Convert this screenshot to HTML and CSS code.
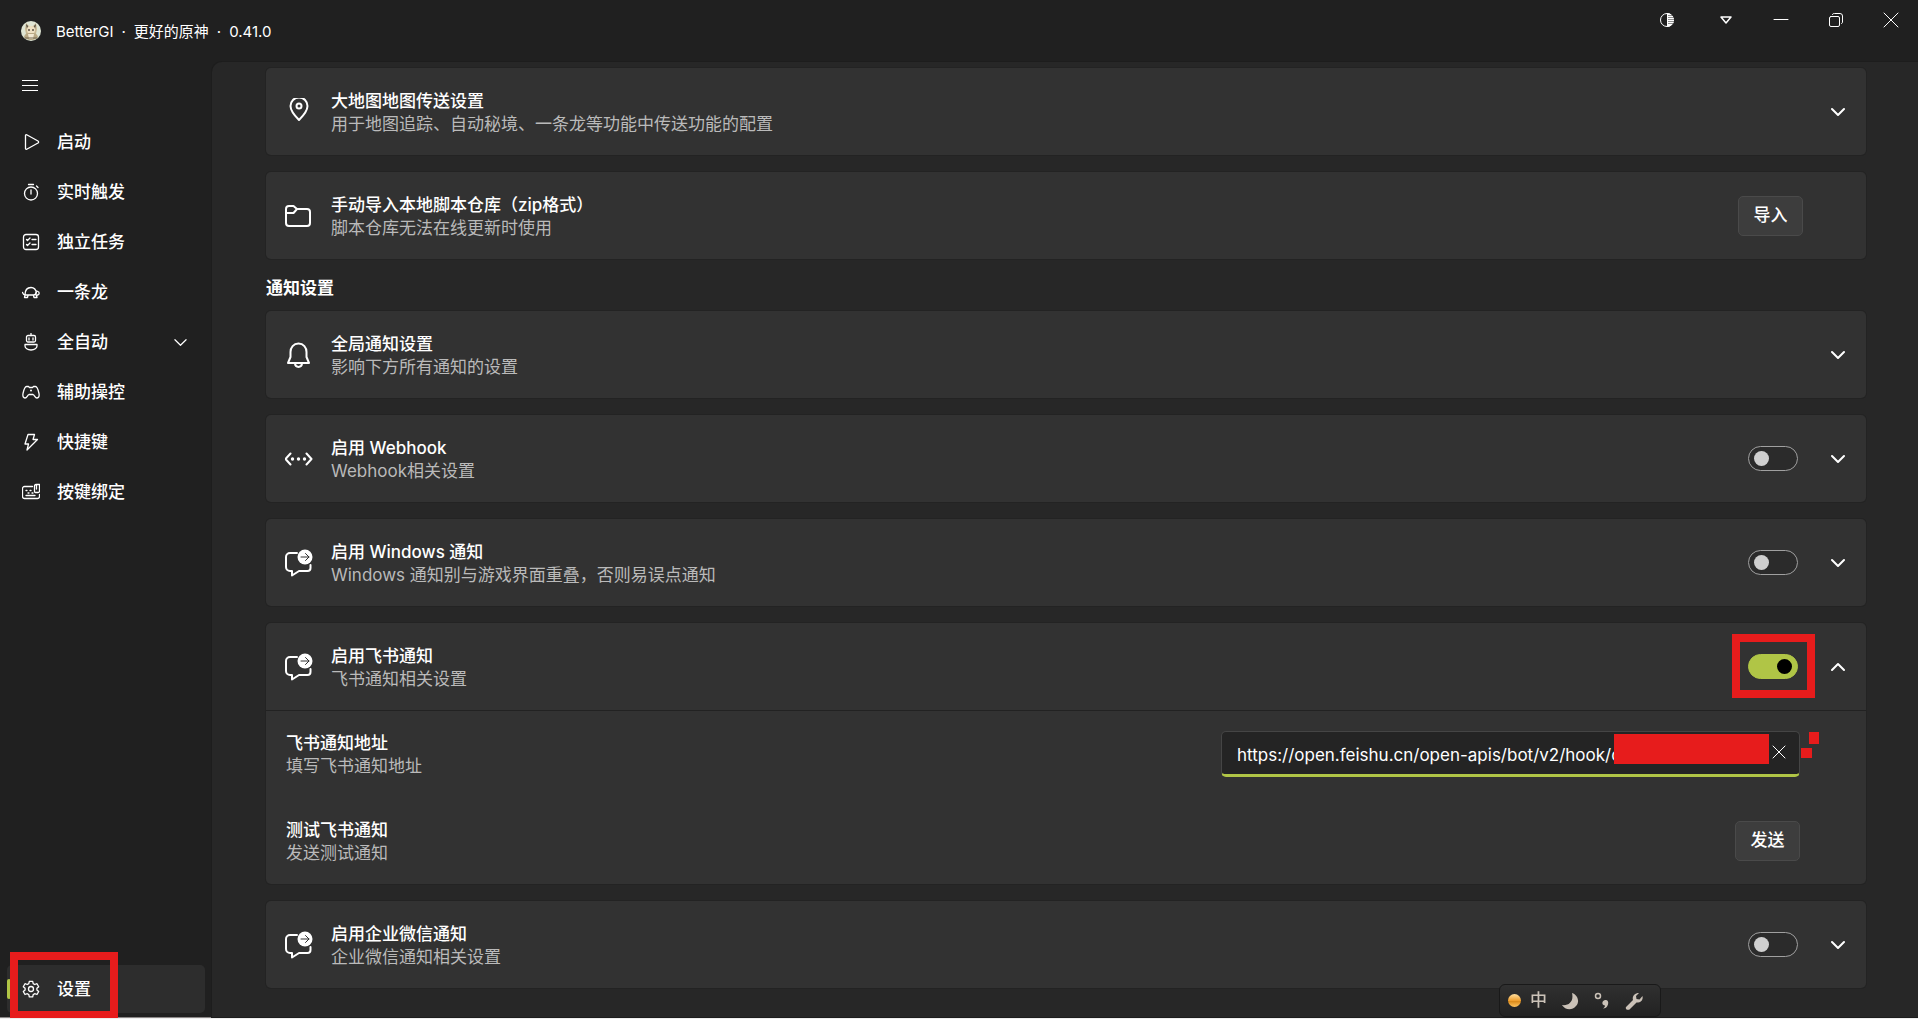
FILE: index.html
```html
<!DOCTYPE html>
<html lang="zh-CN">
<head>
  <meta charset="UTF-8">
  <meta name="viewport" content="width=device-width, initial-scale=1.0">
  <title>BetterGI · 更好的原神</title>
  <link rel="stylesheet" href="styles.css">
</head>
<body>

  <!-- Shared icons -->
  <svg class="sprite" aria-hidden="true">
    <symbol id="chevron-down" viewBox="0 0 14 14"><path d="M1 4l6 6 6-6"/></symbol>
    <symbol id="chevron-up" viewBox="0 0 14 14"><path d="M1 10l6-6 6 6"/></symbol>
    <symbol id="message" viewBox="0 0 28 28">
      <path d="M12 4H5a4 4 0 0 0-4 4v10a4 4 0 0 0 4 4h2v4.500l7-4.500h8.500a3 3 0 0 0 3-3v-3"/>
      <circle class="solid" cx="20" cy="8" r="7.500"/>
      <path class="cut" d="M16 8h8M20.500 4.500L24 8l-3.500 3.500"/>
    </symbol>
  </svg>

  <div class="app">
    <header class="titlebar">
      <svg class="logo" viewBox="0 0 20 20">
        <circle cx="10" cy="10" r="10" fill="#dfe5d3"/>
        <path d="M5 2l3 3h4l3-3 1 6-1 5H5L4 8z" fill="#c9b994"/>
        <path d="M5 3l2 2-1 3zM15 3l-2 2 1 3z" fill="#4d473c"/>
        <ellipse cx="10" cy="9" rx="4" ry="4" fill="#eee0c2"/>
        <path d="M3 16c1-4 4-4 7-4s6 0 7 4c-3 4-11 4-14 0z" fill="#b9a985"/>
        <path d="M7 13h6l-1 5H8z" fill="#f1e8d2"/>
        <path d="M4 17h12" stroke="#746850"/>
        <circle cx="8" cy="9" r="1" fill="#5b5040"/>
        <circle cx="12" cy="9" r="1" fill="#5b5040"/>
      </svg>
      <h1 class="app-title"><span>BetterGI</span><span>·</span><span>更好的原神</span><span>·</span><span>0.41.0</span></h1>
      <div class="window-buttons">
        <button type="button" class="theme-btn" aria-label="主题"><svg viewBox="0 0 14 14"><circle cx="7" cy="7" r="6.500"/><path class="solid" d="M7 0a7 7 0 0 1 0 14z"/><path class="stripes" d="M8 2.500h5M8 4.500h6M8 6.500h6M8 8.500h6M8 10.500h5"/></svg></button>
        <button type="button" aria-label="最小化到托盘"><svg viewBox="0 0 14 14" stroke-width="1.500"><path d="M2 4h10l-5 6z"/></svg></button>
        <button type="button" aria-label="最小化"><svg viewBox="0 0 14 14"><path d="M0 6.500h14"/></svg></button>
        <button type="button" aria-label="还原"><svg viewBox="0 0 14 14"><rect x="0.500" y="3.500" width="10" height="10" rx="1.500"/><path d="M3.500 1.500c0-1 1-1 2-1H11a2.500 2.500 0 0 1 2.500 2.500v6c0 1-.5 1.500-1 1.500"/></svg></button>
        <button type="button" aria-label="关闭"><svg viewBox="0 0 14 14"><path d="M0 0l14 14M14 0L0 14"/></svg></button>
      </div>
    </header>

    <aside class="sidebar">
      <button type="button" class="menu-btn" aria-label="菜单"><svg viewBox="0 0 16 12"><path d="M0 .500h16M0 5.500h16M0 10.500h16"/></svg></button>
      <nav class="nav">
        <a href="#start"><svg viewBox="0 0 18 18"><path d="M3.500 2.500v13c0 .8.600 1 1.200.700L16 10c.8-.5.800-1.500 0-2L4.700 1.800c-.6-.3-1.200 0-1.200.700z"/></svg>启动</a>
        <a href="#trigger"><svg viewBox="0 0 18 18"><circle cx="9" cy="10.500" r="6.500"/><path d="M9 7v4M6.500 1.500h5M14.500 3l1.500 1.500"/></svg>实时触发</a>
        <a href="#task"><svg viewBox="0 0 18 18"><rect x="1.500" y="1.500" width="15" height="15" rx="2.500"/><path d="M4.500 6.500l1 1 2.500-2.500M4.500 11.500l1 1L8 10M10 6.500h4M10 11.500h4"/></svg>独立任务</a>
        <a href="#dragon"><svg viewBox="0 0 18 18"><path d="M3 12c0-5 2.500-7.500 6-7.500s5 2.500 5.500 5.500M.500 9.500c.5 2 1.500 2.500 3 2.500h8c2 0 2.500-1 2.500-3 0-1 1-1 2-.5 1.500.5 1.500 3 0 3.500h-2M3 12l-.5 2.500h3l.5-2M11.500 12.500l.5 2h3l-.5-2"/></svg>一条龙</a>
        <a href="#auto"><svg viewBox="0 0 18 18"><rect x="4.500" y="2.500" width="9" height="6.500" rx="1.500"/><path d="M9 .500v2M7 5v2M11 5v2"/><path d="M3 11.500h12v1.500c0 2-2.500 4-6 4s-6-2-6-4z"/></svg>全自动<svg class="nav-arrow" viewBox="0 0 14 14"><use href="#chevron-down"/></svg></a>
        <a href="#assist"><svg viewBox="0 0 18 18"><path d="M4.500 3.500h2l1 1h3l1-1h2c1.500 0 2.500 2.500 3.500 7 .5 3-.5 4.500-2 4.500-2 0-2.500-3-4-3.500H7C5.500 12 5 15 3 15c-1.500 0-2.500-1.500-2-4.500 1-4.500 2-7 3.500-7z"/><circle class="solid" cx="9" cy="7.500" r="1"/></svg>辅助操控</a>
        <a href="#hotkey"><svg viewBox="0 0 18 18"><path d="M6 1.500h6.500L11 6.500h4.500L5 17l1.500-6H3z"/></svg>快捷键</a>
        <a href="#bind"><svg viewBox="0 0 18 18"><path d="M10.500 3.500h-8a2 2 0 0 0-2 2v8a2 2 0 0 0 2 2h13a2 2 0 0 0 2-2v-2M4 12.500h9M4 7.500h1M8 7.500h1M6 10h1M10 10h1M12.500 8.500V3c0-1 .5-1.500 1.500-1.500h3.500V8c0 1-.5 1.500-1.500 1.500h-2.500c-.7 0-1-.5-1-1zM14.500 2v4"/></svg>按键绑定</a>
        <a href="#settings" class="active" aria-current="page"><svg viewBox="0 0 18 18"><path d="M7.300 1.300h3.400l.5 2.300 1.500.9 2.300-.8 1.700 3-1.800 1.600v1.600l1.800 1.600-1.700 3-2.300-.8-1.500.9-.5 2.300H7.300l-.5-2.300-1.500-.9-2.300.8-1.700-3 1.800-1.600V8.300L1.300 6.700l1.700-3 2.300.8 1.500-.9z"/><circle cx="9" cy="9" r="2.500"/></svg>设置<span class="mark nav-mark"></span></a>
      </nav>
    </aside>

    <main class="content">
      <section class="card card-head">
        <svg class="card-icon" viewBox="0 0 28 28"><path d="M14 22C10 18 5.500 13 5.500 8a8.500 8.500 0 0 1 17 0c0 5-4.500 10-8.500 14z"/><circle cx="14" cy="8" r="2.500"/></svg>
        <div class="text"><h3>大地图地图传送设置</h3><p>用于地图追踪、自动秘境、一条龙等功能中传送功能的配置</p></div>
        <button type="button" class="expander" aria-label="展开"><svg><use href="#chevron-down"/></svg></button>
      </section>

      <section class="card card-head no-expander">
        <svg class="card-icon" viewBox="0 0 28 28"><path d="M1 7a3 3 0 0 1 3-3h4.500L12 7h10a3 3 0 0 1 3 3v11a3 3 0 0 1-3 3H4a3 3 0 0 1-3-3zM1 11h7.500L12 7"/></svg>
        <div class="text"><h3>手动导入本地脚本仓库（zip格式）</h3><p>脚本仓库无法在线更新时使用</p></div>
        <button type="button" class="btn">导入</button>
      </section>

      <h2 class="section-title">通知设置</h2>

      <section class="card card-head">
        <svg class="card-icon" viewBox="0 0 28 28"><path d="M13.500 2.500c-5 0-8 4-8 8.500v5L3 22h21l-2.500-6v-5c0-4.500-3-8.500-8-8.500zM10 22.500c.3 4.500 6.700 4.500 7 0"/></svg>
        <div class="text"><h3>全局通知设置</h3><p>影响下方所有通知的设置</p></div>
        <button type="button" class="expander" aria-label="展开"><svg><use href="#chevron-down"/></svg></button>
      </section>

      <section class="card card-head">
        <svg class="card-icon" viewBox="0 0 28 28"><path d="M5.500 8.500L.500 14l5 5.500M21.500 8.500l5 5.500-5 5.500"/><g class="solid"><circle cx="7.500" cy="14" r="1.700"/><circle cx="13.500" cy="14" r="1.700"/><circle cx="19.500" cy="14" r="1.700"/></g></svg>
        <div class="text"><h3><label for="webhook">启用 Webhook</label></h3><p>Webhook相关设置</p></div>
        <input type="checkbox" class="toggle" id="webhook">
        <button type="button" class="expander" aria-label="展开"><svg><use href="#chevron-down"/></svg></button>
      </section>

      <section class="card card-head">
        <svg class="card-icon"><use href="#message"/></svg>
        <div class="text"><h3><label for="windows">启用 Windows 通知</label></h3><p>Windows 通知别与游戏界面重叠，否则易误点通知</p></div>
        <input type="checkbox" class="toggle" id="windows">
        <button type="button" class="expander" aria-label="展开"><svg><use href="#chevron-down"/></svg></button>
      </section>

      <section class="card">
        <div class="card-head">
          <svg class="card-icon"><use href="#message"/></svg>
          <div class="text"><h3><label for="feishu">启用飞书通知</label></h3><p>飞书通知相关设置</p></div>
          <div class="toggle-wrap">
            <input type="checkbox" class="toggle" id="feishu" checked>
            <span class="mark toggle-mark"></span>
          </div>
          <button type="button" class="expander" aria-label="收起"><svg><use href="#chevron-up"/></svg></button>
        </div>
        <div class="card-row first-row">
          <div class="text"><h3><label for="feishuUrl">飞书通知地址</label></h3><p>填写飞书通知地址</p></div>
          <div class="url-box">
            <input type="text" id="feishuUrl" value="https://open.feishu.cn/open-apis/bot/v2/hook/c">
            <button type="button" class="clear-btn" aria-label="清除"><svg viewBox="0 0 14 14"><path d="M1 1l12 12M13 1L1 13"/></svg></button>
            <span class="redact"></span>
            <span class="redact dot-top"></span>
            <span class="redact dot-bottom"></span>
          </div>
        </div>
        <div class="card-row">
          <div class="text"><h3>测试飞书通知</h3><p>发送测试通知</p></div>
          <button type="button" class="btn">发送</button>
        </div>
      </section>

      <section class="card card-head">
        <svg class="card-icon"><use href="#message"/></svg>
        <div class="text"><h3><label for="wecom">启用企业微信通知</label></h3><p>企业微信通知相关设置</p></div>
        <input type="checkbox" class="toggle" id="wecom">
        <button type="button" class="expander" aria-label="展开"><svg><use href="#chevron-down"/></svg></button>
      </section>
    </main>
  </div>

  <!-- Input method bar -->
  <div class="ime-bar">
    <span class="ime-ball"></span>
    <span class="ime-lang">中</span>
    <svg viewBox="0 0 18 18"><path d="M11 1c6 2 8 9 4 13-4 5-11 4-14-1 7 1 12-4 10-12z"/></svg>
    <svg viewBox="0 0 18 18"><circle class="ring" cx="5" cy="4" r="2.500"/><path d="M11 8.500c3-1.500 5 1 4 4-1 3-3 4-5 4 1.500-1 2-2 2-3-3 0-3.500-4-1-5z"/></svg>
    <svg viewBox="0 0 18 18"><path d="M1 15l7-7c-1-3 1-7 6-7l-3 3 .500 3 3 .500L17.500 4c1 5-3 7-6 6.500l-7 7c-2 1-4.500-.500-3.500-2.500z"/></svg>
  </div>

</body>
</html>
```

FILE: styles.css
```css
* {
  box-sizing: border-box;
}

body {
  margin: 0;
  border-bottom: 1px solid #eee;
  font-family: Inter, 'Noto Sans CJK SC', sans-serif;
  font-size: 17px;
  line-height: 23px;
  color: #fff;
  background-color: #202020;
}

h1, h2, h3, p {
  margin: 0;
  font-size: 17px;
  font-weight: 400;
}

svg {
  fill: none;
  stroke: currentColor;
  stroke-linecap: round;
  stroke-linejoin: round;
  flex-shrink: 0;
}

.solid {
  fill: currentColor;
  stroke: none;
}

button {
  padding: 0;
  border: none;
  background: none;
  color: inherit;
  font: inherit;
  cursor: pointer;
}

.sprite {
  position: absolute;
  width: 0;
  height: 0;
}

.app {
  display: grid;
  grid-template-columns: 212px 1fr;
  grid-template-rows: 62px 1fr;
  height: calc(100vh - 1px);
  border-bottom: 1px solid #8c8888;
}

/* Title bar */
.titlebar {
  grid-column: 1 / 3;
  display: flex;
  align-items: center;
  padding-left: 21px;
}

.logo {
  width: 20px;
  height: 20px;
  margin-right: 15px;
  stroke: none;
}

.app-title {
  display: flex;
  gap: 8px;
  font-size: 15px;
}

.window-buttons {
  display: flex;
  align-self: flex-start;
  margin-left: auto;
}

.window-buttons button {
  display: flex;
  align-items: center;
  justify-content: center;
  width: 55px;
  height: 40px;
}

.window-buttons .theme-btn {
  margin-right: 4px;
}

.window-buttons svg {
  width: 14px;
  height: 14px;
  overflow: visible;
}

.stripes {
  stroke: #202020;
  stroke-linecap: butt;
  opacity: 0.5;
}

/* Sidebar */
.sidebar {
  display: flex;
  flex-direction: column;
  padding: 0 7px 4px;
}

.menu-btn {
  display: flex;
  align-items: center;
  height: 48px;
  padding-left: 15px;
}

.menu-btn svg {
  width: 16px;
  height: 12px;
  stroke-linecap: butt;
}

.nav {
  flex: 1;
  display: flex;
  flex-direction: column;
  gap: 2px;
  padding-top: 8px;
}

.nav a {
  position: relative;
  display: flex;
  align-items: center;
  height: 48px;
  padding: 0 18px 0 15px;
  border-radius: 5px;
  color: #fff;
  font-weight: 500;
  text-decoration: none;
}

.nav svg {
  width: 18px;
  height: 18px;
  margin-right: 17px;
  stroke-width: 1.3;
}

.nav .nav-arrow {
  width: 13px;
  height: 13px;
  margin: 0 0 0 auto;
}

.nav .active {
  margin-top: auto;
  background-color: #2d2d2d;
}

.nav .active::before {
  content: "";
  position: absolute;
  left: 0;
  top: 14px;
  width: 4px;
  height: 20px;
  border-radius: 2px;
  background-color: #b0c546;
}

/* Settings page */
.content {
  overflow: hidden;
  padding: 6px 52px 0 54px;
  background-color: #272727;
  border-top-left-radius: 10px;
  box-shadow: 0 0 0 1px #1d1d1d;
}

.card {
  margin-bottom: 17px;
  border-radius: 5px;
  background-color: #323232;
  box-shadow: 0 0 0 1px #232323;
}

.card-head {
  display: flex;
  align-items: center;
  min-height: 87px;
  padding: 0 14px 0 19px;
}

.no-expander {
  padding-right: 63px;
}

.card-icon {
  width: 28px;
  height: 28px;
  margin-right: 18px;
  stroke-width: 2;
}

.cut {
  stroke: #323232;
  stroke-width: 1;
}

.text {
  flex: 1;
  padding-top: 2px;
}

.text h3 {
  font-weight: 500;
}

.text p {
  color: #bababa;
}

.section-title {
  padding: 1px 0 11px;
  font-weight: 700;
}

.expander {
  display: flex;
  align-items: center;
  justify-content: center;
  width: 28px;
  height: 40px;
  margin-left: 26px;
}

.expander svg {
  width: 14px;
  height: 14px;
  stroke-width: 2;
}

.btn {
  width: 65px;
  height: 40px;
  border: 1px solid #4a4a4a;
  border-radius: 5px;
  background-color: #3d3d3d;
  font-weight: 500;
}

.toggle {
  appearance: none;
  display: block;
  width: 50px;
  height: 25px;
  margin: 0;
  padding: 4px 5px;
  border: 1px solid #a0a0a0;
  border-radius: 13px;
  background-color: #2b2b2b;
  cursor: pointer;
}

.toggle::before {
  content: "";
  display: block;
  width: 15px;
  height: 15px;
  border-radius: 50%;
  background-color: #cfcfcf;
}

.toggle:checked {
  border-color: #b0c546;
  background-color: #b0c546;
}

.toggle:checked::before {
  margin-left: auto;
  background-color: #000;
}

.card-row {
  display: flex;
  align-items: center;
  min-height: 87px;
  padding: 0 66px 0 20px;
}

.first-row {
  border-top: 1px solid #222;
}

.url-box {
  position: relative;
  display: flex;
  align-items: center;
  width: 579px;
  height: 46px;
  border: 1px solid #454545;
  border-bottom: 3px solid #b0c546;
  border-radius: 5px;
  background-color: #242424;
}

.url-box input {
  flex: 1;
  min-width: 0;
  padding: 4px 0 0 15px;
  border: none;
  outline: none;
  background: none;
  color: #fff;
  font: inherit;
}

.clear-btn {
  width: 40px;
  height: 40px;
}

.clear-btn svg {
  width: 14px;
  height: 14px;
}

/* Red marks over the page */
.mark {
  position: absolute;
  border: 8px solid #e71c1c;
  pointer-events: none;
}

.nav-mark {
  left: 3px;
  top: -13px;
  width: 108px;
  height: 67px;
  z-index: 1;
}

.toggle-wrap {
  position: relative;
}

.toggle-mark {
  left: -16px;
  top: -20px;
  width: 83px;
  height: 64px;
}

.redact {
  position: absolute;
  top: 2px;
  right: 30px;
  width: 155px;
  height: 30px;
  background-color: #e71c1c;
}

.dot-top {
  top: 0;
  right: -20px;
  width: 10px;
  height: 12px;
}

.dot-bottom {
  top: 16px;
  right: -13px;
  width: 11px;
  height: 10px;
}

/* Input method bar */
.ime-bar {
  position: fixed;
  right: 257px;
  bottom: 2px;
  display: flex;
  align-items: center;
  gap: 14px;
  width: 162px;
  height: 33px;
  padding-left: 8px;
  border: 1px solid #191919;
  border-radius: 6px;
  background: linear-gradient(#303030, #222);
  color: #cbc2b8;
}

.ime-ball {
  width: 13px;
  height: 13px;
  margin-right: -5px;
  border-radius: 50%;
  background: linear-gradient(#ffe0a0, #f0a030 50%, #d98818 55%, #ffc560);
}

.ime-lang {
  font-weight: 500;
}

.ime-bar svg {
  width: 18px;
  height: 18px;
  fill: currentColor;
  stroke: none;
}

.ime-bar .ring {
  fill: none;
  stroke: currentColor;
  stroke-width: 1.5;
}
```
